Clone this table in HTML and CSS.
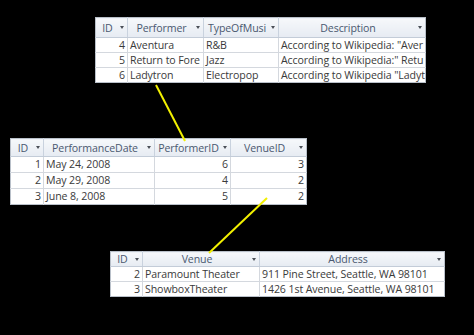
FILE: index.html
```html
<!DOCTYPE html>
<html>
<head>
<meta charset="utf-8">
<link rel="stylesheet" href="styles.css">
</head>
<body>
<div class="canvas">
  <table class="grid t1">
    <colgroup><col class="c1-id"><col class="c1-perf"><col class="c1-type"><col class="c1-desc"></colgroup>
    <thead>
      <tr>
        <th><div class="hd"><span class="lbl">ID</span><span class="arr"></span></div></th>
        <th><div class="hd"><span class="lbl">Performer</span><span class="arr"></span></div></th>
        <th><div class="hd"><span class="lbl">TypeOfMusi</span><span class="arr"></span></div></th>
        <th><div class="hd"><span class="lbl">Description</span><span class="arr"></span></div></th>
      </tr>
    </thead>
    <tbody>
      <tr><td class="num">4</td><td>Aventura</td><td>R&amp;B</td><td>According to Wikipedia: "Aver</td></tr>
      <tr><td class="num">5</td><td>Return to Fore</td><td>Jazz</td><td>According to Wikipedia:" Retu</td></tr>
      <tr><td class="num">6</td><td>Ladytron</td><td>Electropop</td><td>According to Wikipedia "Ladyt</td></tr>
    </tbody>
  </table>

  <table class="grid t2">
    <colgroup><col class="c2-id"><col class="c2-date"><col class="c2-perf"><col class="c2-ven"></colgroup>
    <thead>
      <tr>
        <th><div class="hd"><span class="lbl">ID</span><span class="arr"></span></div></th>
        <th><div class="hd"><span class="lbl">PerformanceDate</span><span class="arr"></span></div></th>
        <th><div class="hd"><span class="lbl">PerformerID</span><span class="arr"></span></div></th>
        <th><div class="hd"><span class="lbl">VenueID</span><span class="arr"></span></div></th>
      </tr>
    </thead>
    <tbody>
      <tr><td class="num">1</td><td>May 24, 2008</td><td class="num">6</td><td class="num">3</td></tr>
      <tr><td class="num">2</td><td>May 29, 2008</td><td class="num">4</td><td class="num">2</td></tr>
      <tr><td class="num">3</td><td>June 8, 2008</td><td class="num">5</td><td class="num">2</td></tr>
    </tbody>
  </table>

  <table class="grid t3">
    <colgroup><col class="c3-id"><col class="c3-ven"><col class="c3-addr"></colgroup>
    <thead>
      <tr>
        <th><div class="hd"><span class="lbl">ID</span><span class="arr"></span></div></th>
        <th><div class="hd"><span class="lbl">Venue</span><span class="arr"></span></div></th>
        <th><div class="hd"><span class="lbl">Address</span><span class="arr"></span></div></th>
      </tr>
    </thead>
    <tbody>
      <tr><td class="num">2</td><td>Paramount Theater</td><td>911 Pine Street, Seattle, WA 98101</td></tr>
      <tr><td class="num">3</td><td>ShowboxTheater</td><td>1426 1st Avenue, Seattle, WA 98101</td></tr>
    </tbody>
  </table>

  <svg class="links" width="474" height="335" viewBox="0 0 474 335">
    <line x1="156" y1="85" x2="185" y2="141" />
    <line x1="267" y1="198" x2="209" y2="253" />
  </svg>
</div>
</body>
</html>
```

FILE: styles.css
```css
html, body {
  margin: 0;
  padding: 0;
  background: #000;
}
.canvas {
  position: relative;
  width: 474px;
  height: 335px;
  overflow: hidden;
  padding-top: 17px;
  box-sizing: border-box;
  font-family: "Open Sans", "Noto Sans", sans-serif;
  font-size: 10.6px;
  letter-spacing: -0.1px;
}
.grid {
  border-collapse: collapse;
  table-layout: fixed;
  background: #fff;
  border: 1px solid #b9c0c9;
}
.grid th {
  padding: 0;
  background: linear-gradient(#f6f8fb, #e6ebf2);
  border-right: 1px solid #c9d2de;
  border-bottom: 1px solid #c3ccd8;
  font-weight: normal;
  color: #4a5870;
}
.hd {
  display: flex;
  align-items: center;
  height: 100%;
  padding: 0 3px 0 2px;
}
.lbl {
  flex: 1;
  text-align: center;
  white-space: nowrap;
  overflow: hidden;
}
.arr {
  flex: none;
  width: 0;
  height: 0;
  margin-left: 3px;
  border-top: 3px solid #4a4f57;
  border-left: 2.5px solid transparent;
  border-right: 2.5px solid transparent;
}
.grid td {
  padding: 0 2px;
  height: 15px;
  line-height: 15px;
  border-right: 1px solid #d4d8de;
  border-bottom: 1px solid #d4d8de;
  color: #3a3a3a;
  white-space: nowrap;
  overflow: hidden;
}
.grid td.num { text-align: right; }
.grid tr > *:last-child { border-right: none; }
.grid tbody tr:last-child td { border-bottom: none; }

.t1 { margin-left: 95px; width: 330px; }
.t1 th { height: 19px; }
.t1 td { height: 14px; line-height: 14px; }
.c1-id { width: 32px; }
.c1-perf { width: 76px; }
.c1-type { width: 75px; }
.c1-desc { width: 147px; }

.t2 { margin-left: 10px; margin-top: 55px; width: 296px; }
.t2 th { height: 17px; }
.c2-id { width: 33px; }
.c2-date { width: 111px; }
.c2-perf { width: 76px; }
.c2-ven { width: 76px; }

.t3 { margin-left: 110px; margin-top: 46px; width: 334px; }
.t3 th { height: 14px; }
.t3 td { height: 14px; line-height: 14px; }
.c3-id { width: 32px; }
.c3-ven { width: 117px; }
.c3-addr { width: 185px; }

.links {
  position: absolute;
  left: 0;
  top: 0;
  pointer-events: none;
}
.links line {
  stroke: #f2f000;
  stroke-width: 2;
}
```
